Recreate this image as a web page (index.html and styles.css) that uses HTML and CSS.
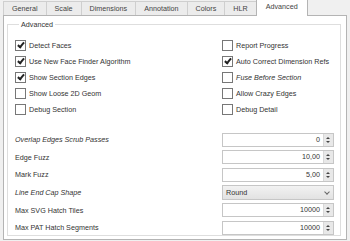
FILE: index.html
```html
<!DOCTYPE html>
<html lang="en">
<head>
  <meta charset="UTF-8">
  <title>Advanced</title>
  <link rel="stylesheet" href="styles.css">
</head>
<body>
  <div class="tabs">
    <div class="tab">General</div>
    <div class="tab">Scale</div>
    <div class="tab">Dimensions</div>
    <div class="tab">Annotation</div>
    <div class="tab">Colors</div>
    <div class="tab">HLR</div>
    <div class="tab active">Advanced</div>
  </div>
  <div class="pane">
    <fieldset class="group">
      <legend>Advanced</legend>
      <div class="checks">
        <label class="check"><span class="box on"></span>Detect Faces</label>
        <label class="check"><span class="box"></span>Report Progress</label>
        <label class="check"><span class="box on"></span>Use New Face Finder Algorithm</label>
        <label class="check"><span class="box on"></span>Auto Correct Dimension Refs</label>
        <label class="check"><span class="box on"></span>Show Section Edges</label>
        <label class="check"><span class="box"></span><i>Fuse Before Section</i></label>
        <label class="check"><span class="box"></span>Show Loose 2D Geom</label>
        <label class="check"><span class="box"></span>Allow Crazy Edges</label>
        <label class="check"><span class="box"></span>Debug Section</label>
        <label class="check"><span class="box"></span>Debug Detail</label>
      </div>
      <div class="fields">
        <i>Overlap Edges Scrub Passes</i>
        <div class="spin"><span class="val">0</span><span class="arrows"></span></div>
        <span>Edge Fuzz</span>
        <div class="spin"><span class="val">10,00</span><span class="arrows"></span></div>
        <span>Mark Fuzz</span>
        <div class="spin"><span class="val">5,00</span><span class="arrows"></span></div>
        <i>Line End Cap Shape</i>
        <div class="combo"><span>Round</span><span class="chev"></span></div>
        <span>Max SVG Hatch Tiles</span>
        <div class="spin"><span class="val">10000</span><span class="arrows"></span></div>
        <span>Max PAT Hatch Segments</span>
        <div class="spin"><span class="val">10000</span><span class="arrows"></span></div>
      </div>
    </fieldset>
  </div>
</body>
</html>
```

FILE: styles.css
```css
body {
  margin: 0;
  width: 350px;
  height: 241px;
  background: #f0f0f0;
  font-family: "Liberation Sans", Arial, sans-serif;
  font-size: 7.2px;
  color: #333;
  overflow: hidden;
}

.tabs {
  display: flex;
  padding: 0 0 0 3px;
  height: 15px;
  align-items: flex-end;
}

.tab {
  height: 13px;
  line-height: 13px;
  padding: 0 8px;
  border: 1px solid #cfcfcf;
  border-bottom: none;
  margin-right: -1px;
  background: #ececec;
  color: #444;
}

.tab.active {
  height: 16px;
  line-height: 14px;
  padding: 0 9px;
  background: #fff;
  border-color: #b4b4b4;
  position: relative;
  z-index: 1;
  margin-bottom: -1px;
}

.pane {
  margin-left: 3px;
  width: 344px;
  height: 225px;
  border: 1px solid #b4b4b4;
  background: #fff;
  padding: 4px 6px 2px 3px;
  box-sizing: border-box;
}

.group {
  margin: 0;
  height: 216px;
  border: 1px solid #dedede;
  padding: 4px 6px 0 7px;
  box-sizing: border-box;
}

.group legend {
  padding: 0 2px;
  margin-left: 4px;
}

.checks {
  display: grid;
  grid-template-columns: 207px 1fr;
  grid-auto-rows: 16.2px;
  align-items: center;
  margin-top: 4px;
}

.check {
  display: flex;
  align-items: center;
  gap: 3px;
}

.box {
  width: 9px;
  height: 9px;
  border: 1px solid #777;
  background: #fff;
  position: relative;
}

.box.on::after {
  content: "";
  position: absolute;
  left: 3px;
  top: 0;
  width: 2px;
  height: 5px;
  border: solid #222;
  border-width: 0 2px 2px 0;
  transform: rotate(40deg);
}

.fields {
  display: grid;
  grid-template-columns: 207px 112px;
  grid-auto-rows: 17.6px;
  align-items: center;
  margin-top: 13px;
}

.spin {
  height: 14px;
  border: 1px solid #c6c6c6;
  display: flex;
  box-sizing: border-box;
}

.val {
  flex: 1;
  text-align: right;
  padding-right: 3px;
  line-height: 12px;
}

.arrows {
  width: 9px;
  background: #e8e8e8;
  border-left: 1px solid #d8d8d8;
  position: relative;
}

.arrows::before,
.arrows::after {
  content: "";
  position: absolute;
  left: 2px;
  border-left: 2px solid transparent;
  border-right: 2px solid transparent;
}

.arrows::before {
  top: 3px;
  border-bottom: 2px solid #444;
}

.arrows::after {
  bottom: 3px;
  border-top: 2px solid #444;
}

.combo {
  height: 15px;
  border: 1px solid #c6c6c6;
  background: linear-gradient(#f2f2f2, #e2e2e2);
  display: flex;
  align-items: center;
  justify-content: space-between;
  padding: 0 4px 0 3px;
  box-sizing: border-box;
}

.chev {
  width: 3px;
  height: 3px;
  border: solid #666;
  border-width: 0 1px 1px 0;
  transform: rotate(45deg);
  margin-bottom: 2px;
}
```
